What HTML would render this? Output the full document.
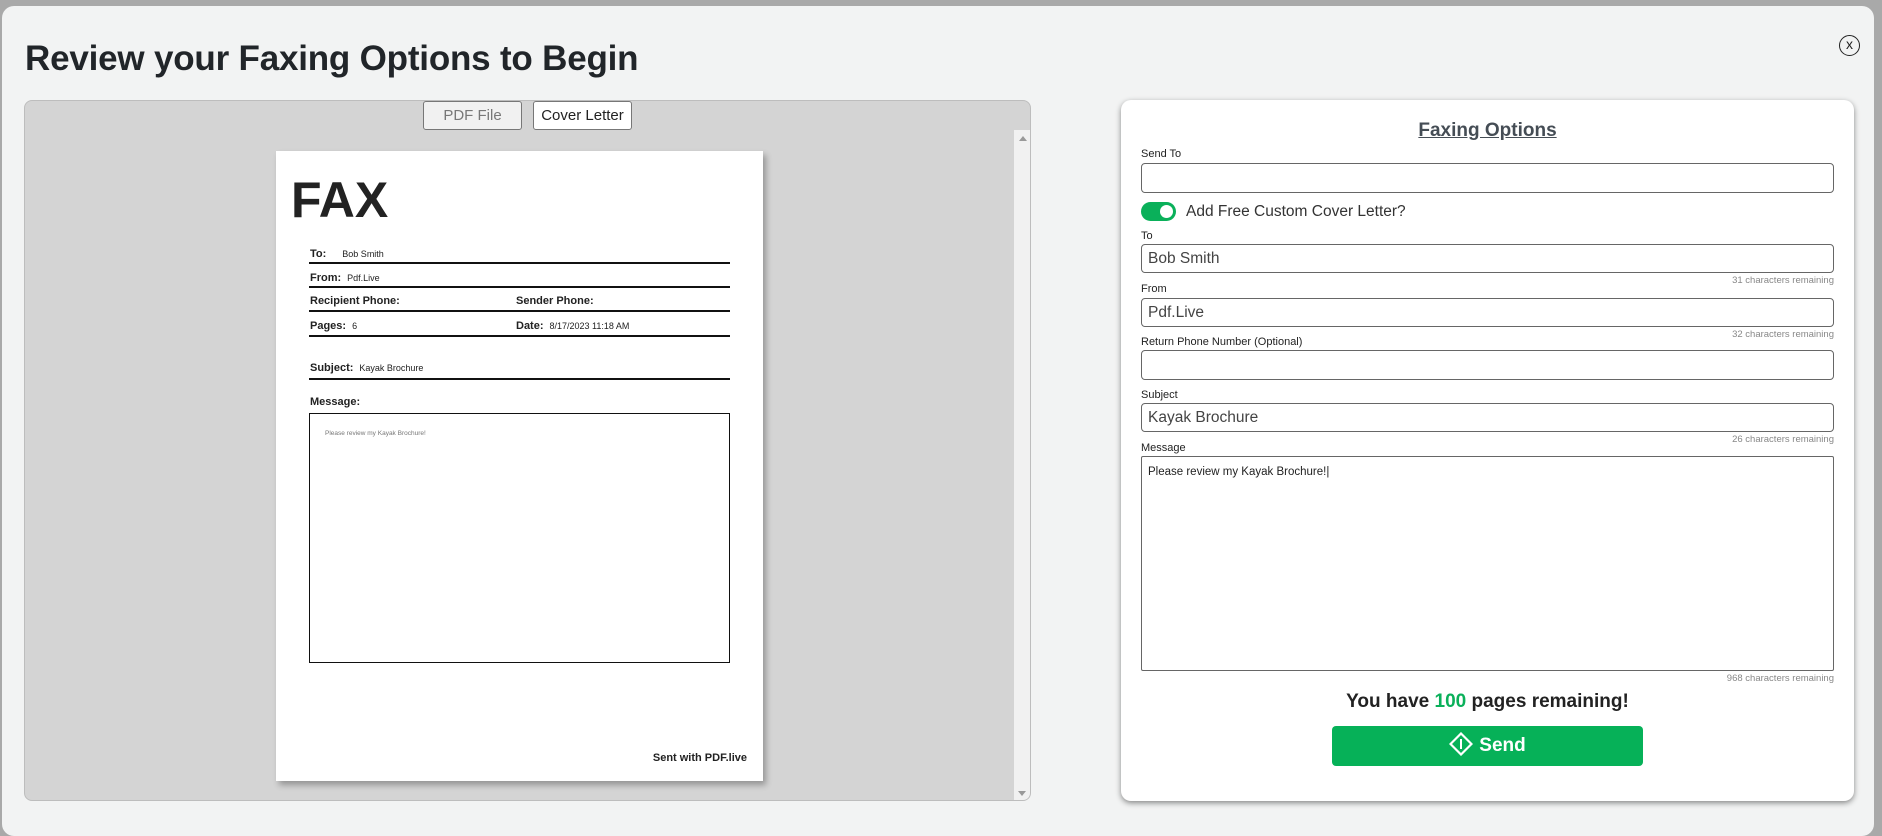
<!DOCTYPE html>
<html><head><meta charset="utf-8"><style>
*{box-sizing:border-box;margin:0;padding:0}
body{width:1882px;height:818px;background:#a9a9a9;font-family:"Liberation Sans",sans-serif;position:relative;overflow:hidden;color:#212529}
.modal{position:absolute;left:2px;top:6px;width:1872px;height:830px;background:#f2f3f3;border-radius:12px}
h1{position:absolute;left:23px;top:33px;font-size:35px;font-weight:bold;color:#212529;letter-spacing:-0.2px}
.close{position:absolute;left:1837px;top:29px;width:21px;height:21px;border:1.6px solid #222;border-radius:50%;font-size:14px;line-height:17px;text-align:center;color:#222}
.left{position:absolute;left:24px;top:100px;width:1007px;height:701px;background:#d4d4d4;border:1px solid #bdbdbd;border-radius:8px;overflow:hidden}
.tab{position:absolute;top:0;height:29px;border:1px solid #777;border-radius:3px;font-size:15px;line-height:27px;text-align:center}
.sb{position:absolute;left:989px;top:29px;width:17px;height:672px;background:#f1f1f1}
.paper{position:absolute;left:251px;top:50px;width:487px;height:630px;background:#fff;box-shadow:3px 4px 6px rgba(0,0,0,.3)}
.p{position:absolute;font-size:11px;font-weight:bold;color:#222}
.v{font-weight:normal;font-size:9px;margin-left:6px}
.ln{position:absolute;left:33px;width:421px;height:1.5px;background:#111}
.card{position:absolute;left:1121px;top:100px;width:733px;height:701px;background:#fff;border-radius:10px;box-shadow:0 2px 6px rgba(0,0,0,.45)}
.lbl{position:absolute;left:20px;font-size:11px;color:#222}
.in{position:absolute;left:20px;width:693px;border:1px solid #666;border-radius:4px;font-size:15.5px;color:#444;padding-left:6px}
.rem{position:absolute;right:20px;font-size:9.5px;color:#888}
</style></head><body>
<div class="modal">
<h1>Review your Faxing Options to Begin</h1>
<div class="close">x</div>
</div>
<div class="left">
 <div class="tab" style="left:398px;width:99px;background:#f1f1f1;color:#777">PDF File</div>
 <div class="tab" style="left:508px;width:99px;background:#fff;color:#222">Cover Letter</div>
 <div class="sb"><div style="margin:6px auto 0;width:0;height:0;border-left:4px solid transparent;border-right:4px solid transparent;border-bottom:5px solid #999"></div><div style="position:absolute;bottom:6px;left:4px;width:0;height:0;border-left:4px solid transparent;border-right:4px solid transparent;border-top:5px solid #999"></div></div>
 <div class="paper">
  <div style="position:absolute;left:15px;top:20px;font-size:50px;font-weight:bold;color:#222">FAX</div>
  <div class="p" style="left:34px;top:97px">To:<span class="v" style="margin-left:16px">Bob Smith</span></div>
  <div class="ln" style="top:111px"></div>
  <div class="p" style="left:34px;top:121px">From:<span class="v">Pdf.Live</span></div>
  <div class="ln" style="top:135px"></div>
  <div class="p" style="left:34px;top:144px">Recipient Phone:</div>
  <div class="p" style="left:240px;top:144px">Sender Phone:</div>
  <div class="ln" style="top:159px"></div>
  <div class="p" style="left:34px;top:169px">Pages:<span class="v">6</span></div>
  <div class="p" style="left:240px;top:169px">Date:<span class="v">8/17/2023 11:18 AM</span></div>
  <div class="ln" style="top:184px"></div>
  <div class="p" style="left:34px;top:211px">Subject:<span class="v">Kayak Brochure</span></div>
  <div class="ln" style="top:227px"></div>
  <div class="p" style="left:34px;top:245px">Message:</div>
  <div style="position:absolute;left:33px;top:262px;width:421px;height:250px;border:1.5px solid #111"><div style="position:absolute;left:15px;top:16px;font-size:6.5px;color:#777">Please review my Kayak Brochure!</div></div>
  <div class="p" style="right:16px;top:601px">Sent with PDF.live</div>
 </div>
</div>
<div class="card">
 <div style="position:absolute;left:0;width:733px;top:20px;text-align:center;font-size:19px;font-weight:bold;color:#454d55;text-decoration:underline">Faxing Options</div>
 <div class="lbl" style="top:48px">Send To</div>
 <div class="in" style="top:63px;height:30px"></div>
 <div style="position:absolute;left:20px;top:102px;width:35px;height:19px;border-radius:10px;background:#0ab05a"><div style="position:absolute;right:3px;top:3px;width:13px;height:13px;border-radius:50%;background:#fff"></div></div>
 <div style="position:absolute;left:65px;top:103px;font-size:15.5px;color:#333">Add Free Custom Cover Letter?</div>
 <div class="lbl" style="top:130px">To</div>
 <div class="in" style="top:144px;height:29px;line-height:27px">Bob Smith</div>
 <div class="rem" style="top:175px">31 characters remaining</div>
 <div class="lbl" style="top:183px">From</div>
 <div class="in" style="top:198px;height:29px;line-height:27px">Pdf.Live</div>
 <div class="rem" style="top:229px">32 characters remaining</div>
 <div class="lbl" style="top:236px">Return Phone Number (Optional)</div>
 <div class="in" style="top:250px;height:30px"></div>
 <div class="lbl" style="top:289px">Subject</div>
 <div class="in" style="top:303px;height:29px;line-height:27px">Kayak Brochure</div>
 <div class="rem" style="top:334px">26 characters remaining</div>
 <div class="lbl" style="top:342px">Message</div>
 <div class="in" style="top:356px;height:215px;border-radius:2px;font-size:11.5px;color:#222;padding-top:9px">Please review my Kayak Brochure!|</div>
 <div class="rem" style="top:573px">968 characters remaining</div>
 <div style="position:absolute;left:0;width:733px;top:591px;text-align:center;font-size:19px;font-weight:bold;color:#222">You have <span style="color:#0ab05a">100</span> pages remaining!</div>
 <div style="position:absolute;left:211px;top:626px;width:311px;height:40px;background:#06b158;border-radius:4px;color:#fff;font-size:19px;font-weight:bold;line-height:40px;text-align:center">
  <svg width="24" height="24" viewBox="0 0 24 24" style="vertical-align:-5px;margin-right:6px"><path d="M12 1.5 L22.5 12 L12 22.5 L1.5 12 Z" fill="none" stroke="#fff" stroke-width="2.2"/><path d="M12 7v10" stroke="#fff" stroke-width="2"/></svg>Send</div>
</div>
</body></html>
